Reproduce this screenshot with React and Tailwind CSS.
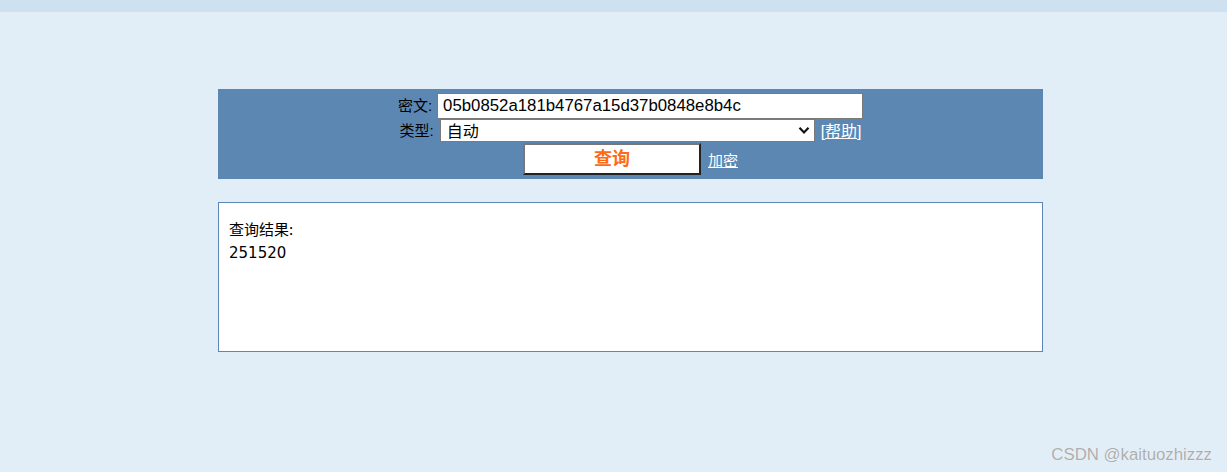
export default function App() {
    return (
        <div className="relative min-h-[472px] w-full bg-[#e1eef7] font-['Liberation_Sans','Noto_Sans_CJK_SC',sans-serif]">
            <div className="h-3 bg-[#cde1f0]"></div>

            <div className="ml-[218px] mt-[77px] w-[825px]">
                {/* query form */}
                <div className="flex h-[90px] flex-col items-center bg-[#5c87b2] pt-1">
                    <div className="flex h-[26px] items-center gap-[5px]">
                        <span className="text-[15px] text-black">密文:</span>
                        <input
                            type="text"
                            defaultValue="05b0852a181b4767a15d37b0848e8b4c"
                            className="h-[26px] w-[426px] border border-[#7a7a7a] bg-white pl-[5px] text-[16.8px] text-black outline-none"
                        />
                    </div>
                    <div className="mt-px flex h-[23px] items-center gap-[6px]">
                        <span className="text-[15px] text-black">类型:</span>
                        <div className="relative">
                            <select className="h-[23px] w-[375px] appearance-none border border-[#7a7a7a] bg-white pl-[6px] text-[16px] text-black outline-none">
                                <option>自动</option>
                            </select>
                            <svg className="pointer-events-none absolute right-[5px] top-[7px] h-[9px] w-[12px]" viewBox="0 0 12 9" fill="none">
                                <path d="M1.5 1.8 6 6.4 10.5 1.8" stroke="#111" strokeWidth="2.2" />
                            </svg>
                        </div>
                        <span className="text-[16px] text-white">
                            [<a href="#" className="underline">帮助</a>]
                        </span>
                    </div>
                    <div className="flex h-[32px] items-center gap-[7px]">
                        <button className="h-[32px] w-[178px] border-2 border-t-[#777] border-l-[#777] border-b-[#222] border-r-[#222] bg-white text-[18px] font-bold text-[#ff6a14]">
                            查询
                        </button>
                        <a href="#" className="mt-[4px] text-[15px] text-white underline">加密</a>
                    </div>
                </div>

                {/* result */}
                <div className="mt-[23px] h-[150px] border border-[#5c87b2] bg-white px-[10px] pt-[14px] font-['DejaVu_Sans','Noto_Sans_CJK_SC',sans-serif] text-[15px] leading-[24px] text-black">
                    <div className="font-['Noto_Sans_CJK_SC',sans-serif]">查询结果:</div>
                    <div>251520</div>
                </div>
            </div>

            <div className="absolute bottom-[5px] right-[15px] text-[16.8px] text-[#adadad] [text-shadow:0_0_1px_#fff]">
                CSDN @kaituozhizzz
            </div>
        </div>
    )
}
